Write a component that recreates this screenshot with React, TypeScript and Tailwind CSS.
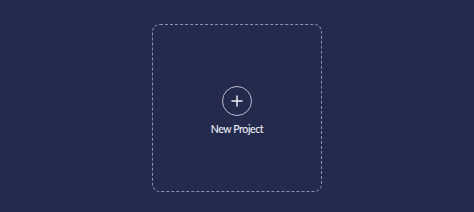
import React from 'react';

export default function App() {
  return (
    <div className="w-full h-screen bg-[#242a4e] flex justify-center pt-6 font-['Lato',sans-serif]">
      <button className="w-[170px] h-[168px] rounded-lg border border-dashed border-[#8d92ab] flex flex-col items-center justify-center pt-1.5">
        <span className="w-[30px] h-[30px] rounded-full border border-[#b9bccb] flex items-center justify-center">
          <svg width="12" height="12" viewBox="0 0 12 12" fill="none" stroke="#eef0f5" strokeWidth="1.5" strokeLinecap="round">
            <path d="M6 1v10M1 6h10" />
          </svg>
        </span>
        <span className="mt-1.5 text-[10.5px] leading-[15px] tracking-[-0.4px] font-medium text-[#eef0f5]">New Project</span>
      </button>
    </div>
  );
}
